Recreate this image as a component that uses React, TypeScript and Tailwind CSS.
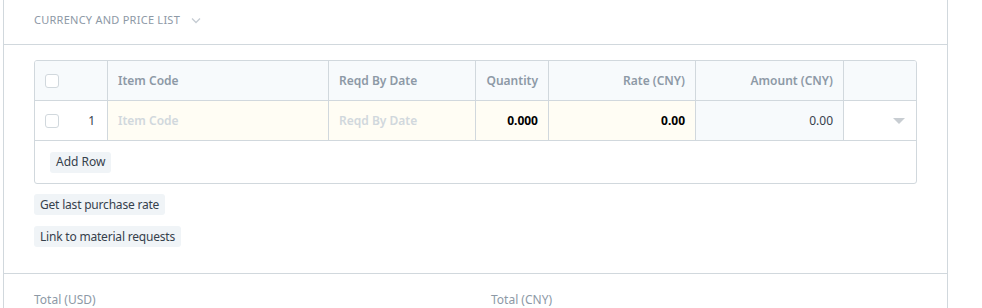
import React from 'react';

const font = { fontFamily: '"Noto Sans", "Open Sans", sans-serif' };

const Check = () => (
  <span className="inline-block w-[14px] h-[14px] rounded-[3px] border border-[#d1d8dd] bg-white" />
);

const App: React.FC = () => {
  return (
    <div className="w-[982px] h-[308px] bg-white overflow-hidden" style={font}>
      <div className="ml-[3px] w-[945px] h-[308px] border-l border-r border-[#d1d8dd]">
        {/* section head */}
        <div className="h-[45px] border-b border-[#d1d8dd] flex items-center pl-[30px] pb-[4px]">
          <span className="text-[11px] uppercase text-[#8d99a6] tracking-[0.25px]">Currency and Price List</span>
          <svg className="ml-[11px] mt-[1px]" width="10" height="7" viewBox="0 0 10 7">
            <path d="M1 1.5 L5 5.5 L9 1.5" fill="none" stroke="#c5ccd3" strokeWidth="1.3" />
          </svg>
        </div>

        <div className="pl-[30px] pt-[15px]">
          {/* grid */}
          <div className="w-[883px] border border-[#d1d8dd] rounded-[3px] overflow-hidden">
            <div className="flex h-[40px] bg-[#f7fafc] border-b border-[#d1d8dd] text-[12px] font-semibold text-[#8d99a6]">
              <div className="w-[73px] flex items-center pl-[10px] border-r border-[#d1d8dd]"><Check /></div>
              <div className="w-[221px] flex items-center pl-[10px] border-r border-[#d1d8dd]">Item Code</div>
              <div className="w-[147px] flex items-center pl-[10px] border-r border-[#d1d8dd]">Reqd By Date</div>
              <div className="w-[73px] flex items-center justify-end pr-[10px] border-r border-[#d1d8dd]">Quantity</div>
              <div className="w-[147px] flex items-center justify-end pr-[10px] border-r border-[#d1d8dd]">Rate (CNY)</div>
              <div className="w-[148px] flex items-center justify-end pr-[10px] border-r border-[#d1d8dd]">Amount (CNY)</div>
              <div className="flex-1" />
            </div>
            <div className="flex h-[40px] border-b border-[#d1d8dd] text-[12px]">
              <div className="w-[73px] flex items-center justify-between pl-[10px] pr-[12px] border-r border-[#d1d8dd] bg-white">
                <Check />
                <span className="text-[#36414c]">1</span>
              </div>
              <div className="w-[221px] flex items-center pl-[10px] border-r border-[#d1d8dd] bg-[#fffdf4] font-semibold text-[#d1d8dd]">Item Code</div>
              <div className="w-[147px] flex items-center pl-[10px] border-r border-[#d1d8dd] bg-[#fffdf4] font-semibold text-[#d1d8dd]">Reqd By Date</div>
              <div className="w-[73px] flex items-center justify-end pr-[10px] border-r border-[#d1d8dd] bg-[#fffdf4] font-bold text-black">0.000</div>
              <div className="w-[147px] flex items-center justify-end pr-[10px] border-r border-[#d1d8dd] bg-[#fffdf4] font-bold text-black">0.00</div>
              <div className="w-[148px] flex items-center justify-end pr-[10px] border-r border-[#d1d8dd] bg-[#f7fafc] text-[#36414c]">0.00</div>
              <div className="flex-1 flex items-center justify-end pr-[11px] bg-white">
                <svg width="12" height="6" viewBox="0 0 12 6"><path d="M0 0 H12 L6 6 Z" fill="#c8cdd2" /></svg>
              </div>
            </div>
            <div className="h-[42px] flex items-center pl-[15px]">
              <button className="h-[21px] px-[6px] rounded-[3px] bg-[#f0f4f7] text-[12px] text-[#36414c]">Add Row</button>
            </div>
          </div>

          <div className="mt-[10px] flex flex-col items-start gap-[11px]">
            <button className="h-[21px] px-[6px] rounded-[3px] bg-[#f0f4f7] text-[12px] text-[#36414c] tracking-[-0.2px]">Get last purchase rate</button>
            <button className="h-[21px] px-[6px] rounded-[3px] bg-[#f0f4f7] text-[12px] text-[#36414c] tracking-[-0.2px]">Link to material requests</button>
          </div>
        </div>

        <div className="mt-[26px] border-t border-[#d1d8dd] pt-[17px] pl-[30px] flex text-[12px] text-[#8d99a6]">
          <div className="w-[457px]">Total (USD)</div>
          <div>Total (CNY)</div>
        </div>
      </div>
    </div>
  );
};

export default App;
